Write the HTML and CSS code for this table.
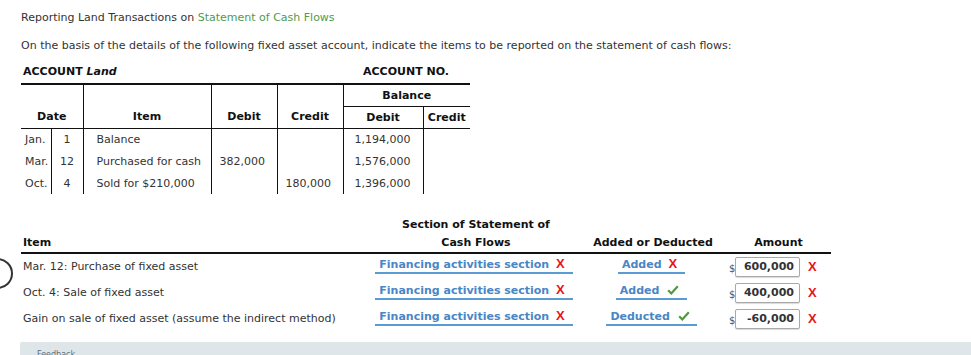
FILE: index.html
```html
<!DOCTYPE html>
<html>
<head>
<meta charset="utf-8">
<link rel="stylesheet" href="styles.css">
</head>
<body>
<div class="page">
  <div class="title">Reporting Land Transactions on <span class="green">Statement of Cash Flows</span></div>
  <div class="prompt">On the basis of the details of the following fixed asset account, indicate the items to be reported on the statement of cash flows:</div>
  <div class="acct-head">
    <span>ACCOUNT <i>Land</i></span>
    <span class="acct-no">ACCOUNT NO.</span>
  </div>
  <table class="ledger">
    <colgroup>
      <col class="c-mon"><col class="c-day"><col class="c-item"><col class="c-num"><col class="c-num"><col class="c-bd"><col class="c-bc">
    </colgroup>
    <tr class="h1">
      <th colspan="2" rowspan="2" class="br bb">Date</th>
      <th rowspan="2" class="br bb">Item</th>
      <th rowspan="2" class="br bb">Debit</th>
      <th rowspan="2" class="br bb">Credit</th>
      <th colspan="2" class="bb">Balance</th>
    </tr>
    <tr class="h2">
      <th class="br bb">Debit</th>
      <th class="bb">Credit</th>
    </tr>
    <tr>
      <td class="br mon">Jan.</td><td class="br day">1</td><td class="br it">Balance</td><td class="br n"></td><td class="br n"></td><td class="br n bal">1,194,000</td><td></td>
    </tr>
    <tr>
      <td class="br mon">Mar.</td><td class="br day">12</td><td class="br it">Purchased for cash</td><td class="br n">382,000</td><td class="br n"></td><td class="br n bal">1,576,000</td><td></td>
    </tr>
    <tr class="last">
      <td class="br mon">Oct.</td><td class="br day">4</td><td class="br it">Sold for $210,000</td><td class="br n"></td><td class="br n">180,000</td><td class="br n bal">1,396,000</td><td></td>
    </tr>
  </table>

  <table class="answers">
    <colgroup>
      <col class="a-item"><col class="a-sec"><col class="a-add"><col class="a-amt">
    </colgroup>
    <tr class="ah">
      <th class="left">Item</th>
      <th>Section of Statement of<br>Cash Flows</th>
      <th>Added or Deducted</th>
      <th>Amount</th>
    </tr>
    <tr>
      <td class="q">Mar. 12: Purchase of fixed asset</td>
      <td class="ctr"><span class="sel sel-sec">Financing activities section <span class="xm">X</span></span></td>
      <td class="ctr"><span class="sel sel-add">Added <span class="xm">X</span></span></td>
      <td><div class="amt"><span class="dol">$</span><span class="inp">600,000</span><span class="xm">X</span></div></td>
    </tr>
    <tr>
      <td class="q">Oct. 4: Sale of fixed asset</td>
      <td class="ctr"><span class="sel sel-sec">Financing activities section <span class="xm">X</span></span></td>
      <td class="ctr"><span class="sel sel-add">Added <svg class="ck" width="12" height="10" viewBox="0 0 12 10"><path d="M1.2 5.2 L4.3 8.4 L10.8 1.2" fill="none" stroke="#4c9a3c" stroke-width="2.2"/></svg></span></td>
      <td><div class="amt"><span class="dol">$</span><span class="inp">400,000</span><span class="xm">X</span></div></td>
    </tr>
    <tr>
      <td class="q">Gain on sale of fixed asset (assume the indirect method)</td>
      <td class="ctr"><span class="sel sel-sec">Financing activities section <span class="xm">X</span></span></td>
      <td class="ctr"><span class="sel sel-ded">Deducted <svg class="ck" width="12" height="10" viewBox="0 0 12 10"><path d="M1.2 5.2 L4.3 8.4 L10.8 1.2" fill="none" stroke="#4c9a3c" stroke-width="2.2"/></svg></span></td>
      <td><div class="amt"><span class="dol">$</span><span class="inp">-60,000</span><span class="xm">X</span></div></td>
    </tr>
  </table>

  <div class="feedback"><span>Feedback</span></div>
</div>
<div class="ring"></div>
</body>
</html>
```
FILE: styles.css
```css
html, body {
  margin: 0;
  padding: 0;
  background: #fff;
  overflow: hidden;
}
body {
  font-family: "DejaVu Sans", Verdana, sans-serif;
  font-size: 11px;
  color: #333;
  position: relative;
  height: 355px;
}
.page {
  padding: 11px 0 0 21px;
}
.title {
  line-height: 14px;
  height: 14px;
}
.green { color: #4f9b4f; }
.prompt {
  margin-top: 14px;
  line-height: 14px;
}
.acct-head {
  margin-top: 12px;
  width: 449px;
  display: flex;
  font-weight: bold;
  color: #111;
  line-height: 14px;
  padding-left: 2px;
  box-sizing: border-box;
}
.acct-head i { font-weight: bold; }
.acct-no { margin-left: auto; margin-right: 21px; }

.ledger {
  margin-top: 4px;
  border-collapse: collapse;
  table-layout: fixed;
  width: 449px;
  border-top: 2px solid #111;
}
.c-mon { width: 30px; }
.c-day { width: 32px; }
.c-item { width: 128px; }
.c-num { width: 66px; }
.c-bd { width: 80px; }
.c-bc { width: 47px; }
.ledger th, .ledger td {
  padding: 0;
  white-space: nowrap;
}
.ledger th {
  font-weight: bold;
  color: #111;
  text-align: center;
  vertical-align: middle;
}
.ledger .h1 { height: 22px; }
.ledger .h2 { height: 22px; }
.ledger tr.h1 th[rowspan] { vertical-align: bottom; padding-bottom: 5px; }
.br { border-right: 1px solid #111; }
.bb { border-bottom: 1px solid #111; }
.ledger td { height: 22px; vertical-align: middle; }
.ledger tr.last td { height: 21px; }
.mon { padding-left: 4px !important; }
.day { text-align: center; }
.it { padding-left: 13px !important; }
.n { padding-left: 8px !important; }
.bal { padding-left: 11px !important; }

.answers {
  margin-top: 22px;
  border-collapse: collapse;
  table-layout: fixed;
  width: 810px;
}
.a-item { width: 351px; }
.a-sec { width: 208px; }
.a-add { width: 146px; }
.a-amt { width: 105px; }
.answers th {
  font-weight: bold;
  color: #111;
  line-height: 18px;
  vertical-align: bottom;
  padding: 0;
  border-bottom: 2px solid #111;
  text-align: center;
  white-space: nowrap;
}
.answers th.left { text-align: left; padding-left: 2px; }
.answers td {
  height: 26px;
  padding: 0;
  vertical-align: middle;
  white-space: nowrap;
}
.q { padding-left: 2px !important; }
.ctr { text-align: center; }
.sel {
  display: inline-block;
  color: #4a86c6;
  font-weight: bold;
  border-bottom: 2px solid #5b9bd3;
  line-height: 13px;
  padding: 0 8px 1px 4px;
  position: relative;
  top: -1px;
}
.sel-sec { margin-left: -4px; }
.sel-add { padding-right: 8px; margin-left: -3px; }
.sel-ded { padding-right: 7px; margin-left: -3px; }
.xm {
  color: #e8141a;
  font-weight: bold;
  font-family: "Liberation Sans", Arial, sans-serif;
  font-size: 13px;
  margin-left: 3px;
}
.ck { margin-left: 4px; vertical-align: -1px; }
.amt {
  display: flex;
  align-items: center;
  padding-left: 3px;
}
.dol {
  font-size: 10px;
  color: #555;
  align-self: flex-end;
  margin-bottom: 3px;
  width: 6px;
}
.inp {
  box-sizing: border-box;
  width: 65px;
  height: 20px;
  border: 1px solid #a9a9a9;
  border-radius: 2px;
  box-shadow: 0 1px 1px rgba(0,0,0,0.15);
  text-align: right;
  padding-right: 5px;
  line-height: 18px;
  font-weight: bold;
  color: #333;
  background: #fff;
}
.amt .xm { margin-left: 8px; }
.feedback {
  margin-top: 10px;
  margin-left: -1px;
  height: 20px;
  background: #dfe6e9;
  border-radius: 2px 0 0 0;
  padding-left: 17px;
  font-size: 8px;
  color: #5a7080;
  line-height: 26px;
}
.ring {
  position: absolute;
  left: -18px;
  top: 258px;
  width: 27px;
  height: 27px;
  border: 2.5px solid #333;
  border-radius: 50%;
}
```
